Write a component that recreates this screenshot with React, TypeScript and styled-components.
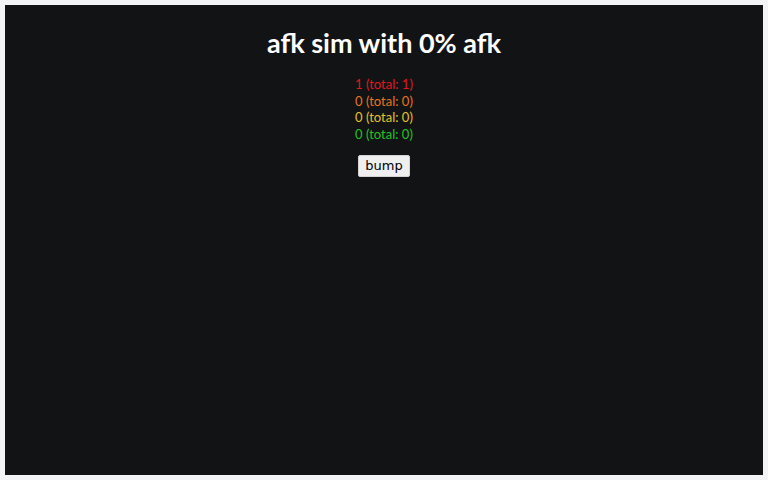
import styled, { createGlobalStyle } from 'styled-components';

const GlobalStyle = createGlobalStyle`
  html, body {
    margin: 0;
    padding: 0;
    background-color: #f3f4f5;
  }
`;

const Panel = styled.main`
  margin: 5px;
  height: 470px;
  box-sizing: border-box;
  background-color: #111315;
  color: #fff;
  font-family: 'Lato', 'Open Sans', sans-serif;
  display: flex;
  flex-direction: column;
  align-items: center;
  padding-top: 21px;
`;

const Title = styled.h1`
  margin: 0 0 17px;
  font-size: 27px;
  font-weight: bold;
`;

const Counters = styled.div`
  display: flex;
  flex-direction: column;
  align-items: center;
`;

const Counter = styled.div<{ $color: string }>`
  color: ${(p) => p.$color};
  font-size: 13px;
  line-height: 16.6px;
`;

const BumpButton = styled.button`
  margin-top: 13px;
  font-family: 'DejaVu Sans', sans-serif;
  font-size: 13px;
  padding: 2px 6px 3px;
  background-color: #efefef;
  color: #000;
  border: 1px solid #d4d4d4;
  border-radius: 2px;
`;

const levels = [
  { count: 1, total: 1, color: '#e3161b' },
  { count: 0, total: 0, color: '#e8741c' },
  { count: 0, total: 0, color: '#e6c12a' },
  { count: 0, total: 0, color: '#22c322' },
];

const App = () => {
  return (
    <>
      <GlobalStyle />
      <Panel>
        <Title>afk sim with 0% afk</Title>
        <Counters>
          {levels.map((l, i) => (
            <Counter key={i} $color={l.color}>
              {l.count} (total: {l.total})
            </Counter>
          ))}
        </Counters>
        <BumpButton>bump</BumpButton>
      </Panel>
    </>
  );
};

export default App;
